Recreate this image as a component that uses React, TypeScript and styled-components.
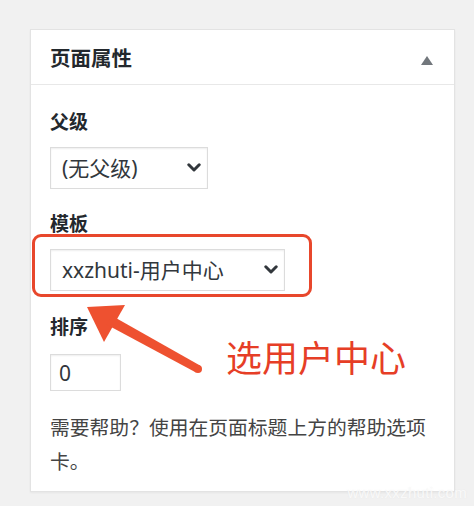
import React from "react";
import styled, { createGlobalStyle } from "styled-components";

const Global = createGlobalStyle`
  html, body { margin: 0; padding: 0; background: #f1f1f1; }
  body {
    font-family: "Noto Sans", "Noto Sans CJK SC", sans-serif;
    color: #23282d;
  }
`;

const Page = styled.div`
  width: 474px;
  height: 506px;
  box-sizing: border-box;
  padding: 29px 19px 0 30px;
  position: relative;
  overflow: hidden;
`;

const Card = styled.section`
  position: relative;
  width: 425px;
  box-sizing: border-box;
  background: #fff;
  border: 1px solid #e3e3e3;
  box-shadow: 0 1px 2px rgba(0, 0, 0, 0.05);
`;

const Header = styled.header`
  height: 54px;
  display: flex;
  align-items: center;
  justify-content: space-between;
  padding: 0 21px 0 19px;
  border-bottom: 1px solid #e8e8e8;
`;

const Title = styled.h2`
  margin: 0;
  font-family: "Noto Sans CJK SC", sans-serif;
  font-size: 20.5px;
  font-weight: 700;
  color: #23282d;
  line-height: 1;
`;

const Toggle = styled.span`
  width: 0;
  height: 0;
  border-left: 6.5px solid transparent;
  border-right: 6.5px solid transparent;
  border-bottom: 9px solid #72777c;
  margin-top: 6px;
`;

const Body = styled.div`
  padding: 22px 20px 13px 19px;
  display: flex;
  flex-direction: column;
`;

const Label = styled.label<{ $top?: number }>`
  display: block;
  margin-top: ${(p) => p.$top ?? 0}px;
  font-family: "Noto Sans CJK SC", sans-serif;
  font-size: 19px;
  font-weight: 700;
  line-height: 28px;
  color: #23282d;
`;

const SelectWrap = styled.div<{ $width: number; $top?: number }>`
  position: relative;
  width: ${(p) => p.$width}px;
  margin-top: ${(p) => p.$top ?? 12}px;
`;

const Select = styled.select`
  appearance: none;
  -webkit-appearance: none;
  display: block;
  width: 100%;
  height: 42px;
  box-sizing: border-box;
  margin: 0;
  padding: 0 30px 0 11px;
  border: 1.5px solid #dcdcdc;
  border-radius: 0;
  background: #fff;
  box-shadow: inset 0 1px 2px rgba(0, 0, 0, 0.07);
  font-family: "Noto Sans", "Noto Sans CJK SC", sans-serif;
  font-size: 21px;
  color: #32373c;
  outline: none;
`;

const Chevron = styled.svg`
  position: absolute;
  right: 7px;
  top: 50%;
  width: 14px;
  height: 9px;
  margin-top: -5px;
  pointer-events: none;
`;

const Highlight = styled.div`
  position: absolute;
  left: -18px;
  top: -15px;
  right: -27px;
  bottom: -6px;
  border: 3px solid #e8472c;
  border-radius: 9px;
  pointer-events: none;
`;

const NumberInput = styled.input`
  display: block;
  width: 71px;
  height: 37px;
  box-sizing: border-box;
  margin: 14px 0 0;
  padding: 0 8px;
  border: 1.5px solid #dcdcdc;
  border-radius: 0;
  box-shadow: inset 0 1px 2px rgba(0, 0, 0, 0.07);
  font-family: "Noto Sans", sans-serif;
  font-size: 21px;
  color: #32373c;
  outline: none;
`;

const Help = styled.p`
  margin: 19px 0 0;
  font-family: "Noto Sans CJK SC", sans-serif;
  font-size: 19.8px;
  line-height: 34px;
  color: #444;
`;

const Note = styled.div`
  position: absolute;
  left: 195px;
  top: 308px;
  font-family: "Noto Sans CJK SC", sans-serif;
  font-size: 36px;
  line-height: 1;
  color: #e63e26;
  white-space: nowrap;
  pointer-events: none;
`;

const Arrow = styled.svg`
  position: absolute;
  left: 50px;
  top: 270px;
  width: 130px;
  height: 80px;
  pointer-events: none;
`;

const Watermark = styled.div`
  position: absolute;
  right: 7px;
  bottom: 5px;
  font-family: "Liberation Sans", sans-serif;
  font-size: 15px;
  letter-spacing: 0.3px;
  color: rgba(255, 255, 255, 0.75);
  text-shadow: 0 0 1px rgba(220, 220, 220, 0.5);
  pointer-events: none;
`;

const ChevronIcon = () => (
  <Chevron viewBox="0 0 14 9">
    <path d="M1.8 1.8 L7 7 L12.2 1.8" fill="none" stroke="#32373c" strokeWidth="3" strokeLinecap="round" strokeLinejoin="round" />
  </Chevron>
);

export default function App() {
  return (
    <>
      <Global />
      <Page>
        <Card>
          <Header>
            <Title>页面属性</Title>
            <Toggle />
          </Header>
          <Body>
            <Label>父级</Label>
            <SelectWrap $width={158}>
              <Select defaultValue="none">
                <option value="none">(无父级)</option>
              </Select>
              <ChevronIcon />
            </SelectWrap>

            <Label $top={20}>模板</Label>
            <SelectWrap $width={235}>
              <Select defaultValue="uc">
                <option value="uc">xxzhuti-用户中心</option>
              </Select>
              <ChevronIcon />
              <Highlight />
            </SelectWrap>

            <Label $top={21}>排序</Label>
            <NumberInput type="text" defaultValue="0" readOnly />

            <Help>需要帮助？使用在页面标题上方的帮助选项卡。</Help>
          </Body>

          <Arrow viewBox="0 0 130 80">
            <polygon points="6,7 44,5 23,42" fill="#ee5130" />
            <polygon points="25.5,24.5 30.5,15.5 119,65.5 115,72.5" fill="#ee5130" />
            <circle cx="117" cy="69" r="4" fill="#ee5130" />
          </Arrow>
          <Note>选用户中心</Note>
        </Card>
        <Watermark>www.xxzhuti.com</Watermark>
      </Page>
    </>
  );
}
